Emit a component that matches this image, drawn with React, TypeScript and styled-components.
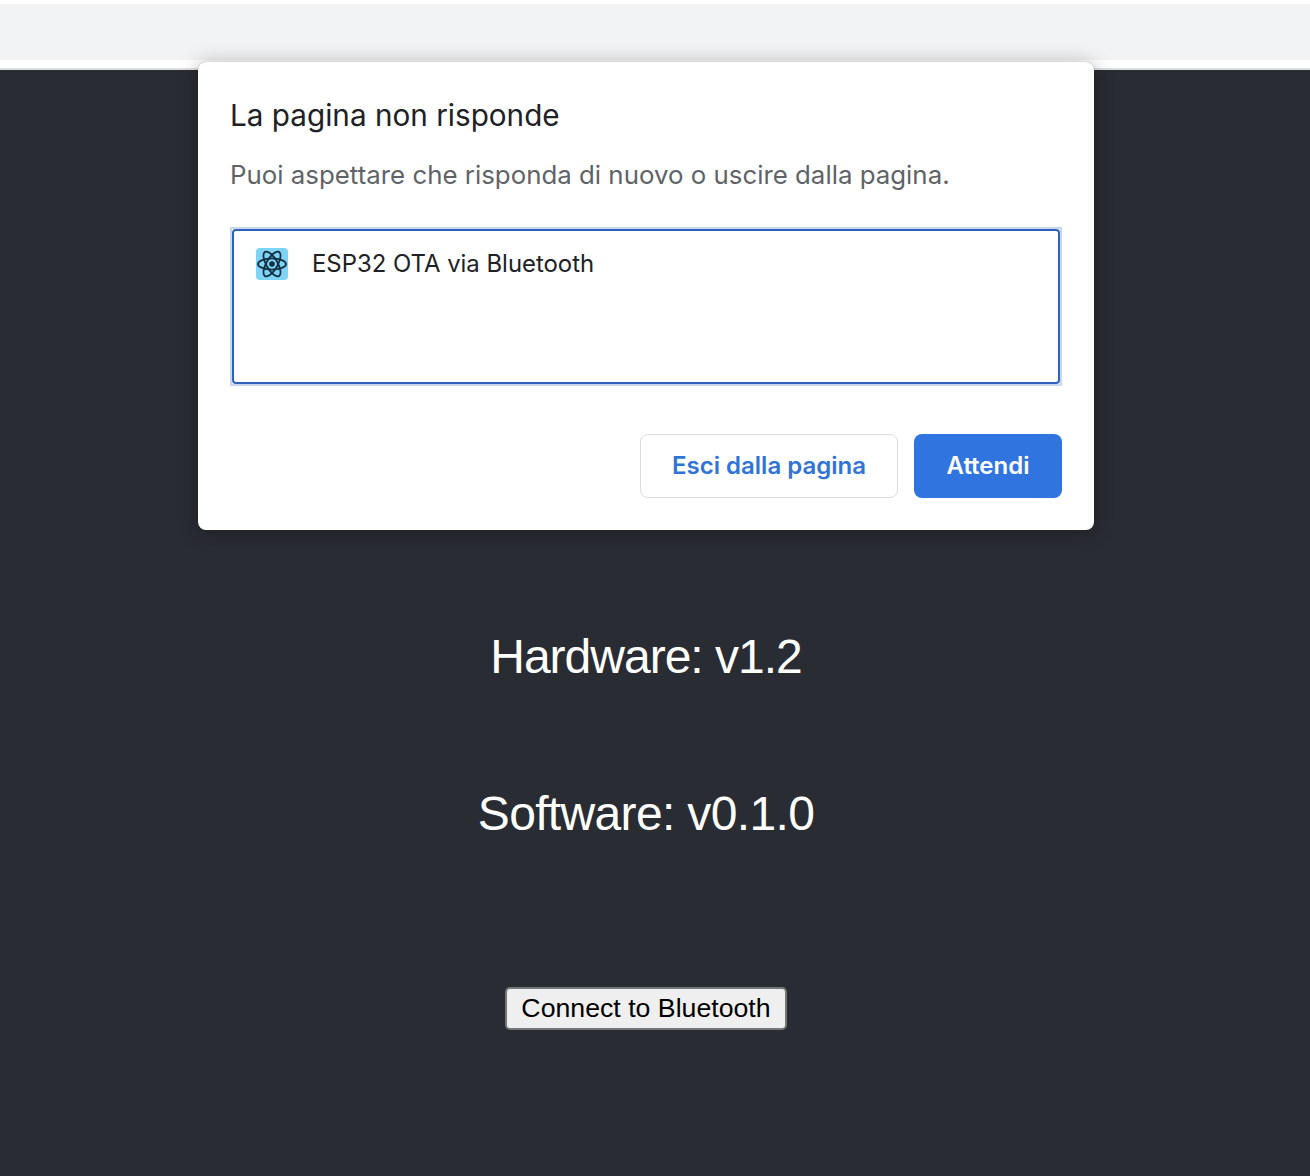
import React from "react";
import styled, { createGlobalStyle } from "styled-components";

const GlobalStyle = createGlobalStyle`
  html, body {
    margin: 0;
    padding: 0;
    background-color: #ffffff;
  }
  #root {
    width: 1310px;
    height: 1176px;
    overflow: hidden;
  }
`;

const Page = styled.div`
  position: relative;
  width: 1310px;
  height: 1176px;
  display: flex;
  flex-direction: column;
  padding-top: 4px;
  box-sizing: border-box;
`;

const Toolbar = styled.div`
  height: 56px;
  flex-shrink: 0;
  background-color: #f1f3f4;
`;

const ToolbarGap = styled.div`
  height: 8px;
  flex-shrink: 0;
  background-color: #ffffff;
  border-bottom: 2px solid #dcdddf;
`;

const Main = styled.main`
  flex: 1;
  background-color: #2a2c33;
  display: flex;
  flex-direction: column;
  align-items: center;
  padding: 559px 18px 0 0;
  color: white;
  font-family: "Liberation Sans", Arial, sans-serif;
`;

const Version = styled.p<{ $tracking: number }>`
  margin: 0 0 101px;
  font-size: 48px;
  line-height: 56px;
  font-weight: 400;
  text-align: center;
  letter-spacing: ${(p) => p.$tracking}px;
`;

const ConnectButton = styled.button`
  margin-top: 44px;
  width: 282px;
  height: 43px;
  padding: 0;
  box-sizing: border-box;
  background-color: #efefef;
  border: 2px solid #767676;
  border-radius: 5px;
  color: #000000;
  font-family: "Liberation Sans", Arial, sans-serif;
  font-size: 26.7px;
`;

const Dialog = styled.div`
  position: absolute;
  left: 198px;
  top: 62px;
  width: 896px;
  height: 468px;
  box-sizing: border-box;
  padding: 32px;
  background-color: #ffffff;
  border-radius: 8px;
  box-shadow: 0 2px 20px rgba(0, 0, 0, 0.3), 0 0 1px rgba(0, 0, 0, 0.4);
  font-family: "Inter", "Noto Sans", sans-serif;
  display: flex;
  flex-direction: column;
`;

const Title = styled.h2`
  margin: 0;
  font-size: 29.7px;
  line-height: 43px;
  font-weight: 400;
  color: #202124;
`;

const Message = styled.p`
  margin: 18px 0 0;
  font-size: 25.85px;
  line-height: 40px;
  color: #5f6368;
`;

const ListFrame = styled.div`
  margin-top: 32px;
  border: 2px solid #c9d6ee;
`;

const ListBox = styled.div`
  height: 155px;
  box-sizing: border-box;
  border: 2px solid #2f62bd;
  border-radius: 4px;
  padding: 17px 22px;
  display: flex;
  align-items: flex-start;
  gap: 24px;
`;

const AppIcon = styled.span`
  width: 32px;
  height: 32px;
  flex-shrink: 0;
  border-radius: 4px;
  background-color: #7ed3f6;
  display: flex;
  align-items: center;
  justify-content: center;
`;

const AppName = styled.span`
  font-size: 23.9px;
  line-height: 32px;
  color: #202124;
`;

const Actions = styled.div`
  margin-top: 48px;
  display: flex;
  justify-content: flex-end;
  gap: 16px;
`;

const ActionButton = styled.button<{ $primary?: boolean }>`
  height: 64px;
  width: ${(p) => (p.$primary ? "148px" : "258px")};
  box-sizing: border-box;
  padding: 0 0 1px;
  border-radius: 8px;
  border: ${(p) => (p.$primary ? "none" : "1.5px solid #dadce0")};
  background-color: ${(p) => (p.$primary ? "#3074e0" : "#ffffff")};
  color: ${(p) => (p.$primary ? "#ffffff" : "#3074d8")};
  font-family: "Inter", "Noto Sans", sans-serif;
  font-size: 24px;
  font-weight: 560;
`;

const ReactLogo = () => (
  <svg width="30" height="30" viewBox="0 0 30 30" fill="none" stroke="#14303f" strokeWidth="1.8">
    <ellipse cx="15" cy="15" rx="14" ry="5.6" />
    <ellipse cx="15" cy="15" rx="14" ry="5.6" transform="rotate(60 15 15)" />
    <ellipse cx="15" cy="15" rx="14" ry="5.6" transform="rotate(120 15 15)" />
    <circle cx="15" cy="15" r="2.8" fill="#14303f" stroke="none" />
  </svg>
);

const App = () => {
  return (
    <Page>
      <GlobalStyle />
      <Toolbar />
      <ToolbarGap />
      <Main>
        <Version $tracking={-1}>Hardware: v1.2</Version>
        <Version $tracking={-0.65}>Software: v0.1.0</Version>
        <ConnectButton>Connect to Bluetooth</ConnectButton>
      </Main>
      <Dialog>
        <Title>La pagina non risponde</Title>
        <Message>Puoi aspettare che risponda di nuovo o uscire dalla pagina.</Message>
        <ListFrame>
          <ListBox>
            <AppIcon>
              <ReactLogo />
            </AppIcon>
            <AppName>ESP32 OTA via Bluetooth</AppName>
          </ListBox>
        </ListFrame>
        <Actions>
          <ActionButton>Esci dalla pagina</ActionButton>
          <ActionButton $primary>Attendi</ActionButton>
        </Actions>
      </Dialog>
    </Page>
  );
};

export default App;
